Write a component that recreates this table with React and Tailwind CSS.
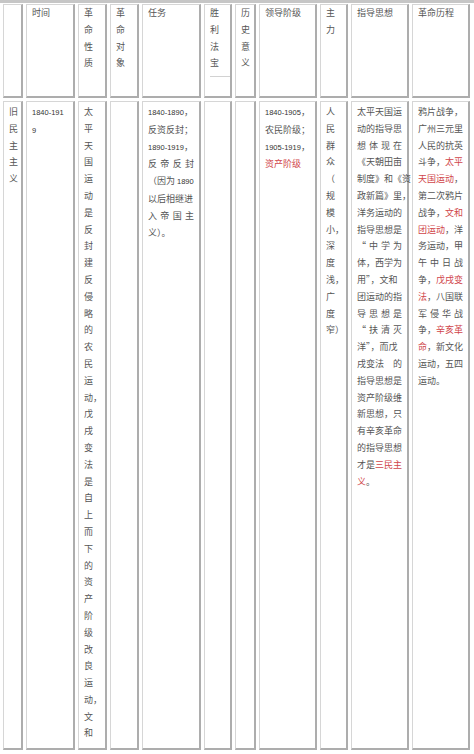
const red = "text-[#d0454a]";

function Cell({ children, className = "" }) {
	return (
		<div
			className={
				"border-t border-l border-t-[#d6d6d6] border-l-[#d6d6d6] border-r-2 border-b-2 border-r-[#adadad] border-b-[#adadad] pl-[5px] pr-[5px] " +
				className
			}
		>
			{children}
		</div>
	);
}

// one line of text, kept as laid out in the document
function L({ children }) {
	return <div className="whitespace-nowrap">{children}</div>;
}

// a spread-out line (justified with fewer chars)
function J({ items }) {
	return (
		<div className="flex justify-between whitespace-nowrap">
			{items.map((t, i) => (
				<span key={i}>{t}</span>
			))}
		</div>
	);
}

function N({ children }) {
	return <span className="font-['Liberation_Sans',sans-serif] text-[7.5px] text-[#333]">{children}</span>;
}

function R({ children }) {
	return <span className={red}>{children}</span>;
}

function Stack({ text }) {
	return (
		<>
			{text.map((t, i) => (
				<L key={i}>{t}</L>
			))}
		</>
	);
}

export default function App() {
	const nature =
		"太 平 天 国 运 动 是 反 封 建 反 侵 略 的 农 民 运 动， 戊 戌 变 法 是 自 上 而 下 的 资 产 阶 级 改 良 运 动， 文 和".split(" ");

	return (
		<div className="w-[474px] h-[754px] bg-white border-t-[3px] border-[#c6c6c6] pl-[3px] pt-px overflow-hidden font-['Noto_Sans_CJK_SC',sans-serif] text-[9px] leading-[16.8px] text-[#555]">
			<div className="grid grid-cols-[20px_49px_29px_29px_59px_28px_21px_58px_28px_58px_58px] grid-rows-[94px_649px] gap-[3px]">
				{/* header row */}
				<Cell />
				<Cell>
					<L>时间</L>
				</Cell>
				<Cell>
					<Stack text={["革", "命", "性", "质"]} />
				</Cell>
				<Cell>
					<Stack text={["革", "命", "对", "象"]} />
				</Cell>
				<Cell>
					<L>任务</L>
				</Cell>
				<Cell>
					<Stack text={["胜", "利", "法", "宝"]} />
					<div className="w-[20px] h-px bg-[#d2d2d2] mt-[4px]" />
				</Cell>
				<Cell>
					<Stack text={["历", "史", "意", "义"]} />
				</Cell>
				<Cell>
					<L>领导阶级</L>
				</Cell>
				<Cell>
					<Stack text={["主", "力"]} />
				</Cell>
				<Cell>
					<L>指导思想</L>
				</Cell>
				<Cell>
					<L>革命历程</L>
				</Cell>

				{/* body row */}
				<Cell className="pt-[2px] pl-[4px]">
					<Stack text={["旧", "民", "主", "主", "义"]} />
				</Cell>
				<Cell className="pt-[2px]">
					<L>
						<N>1840-191</N>
					</L>
					<L>
						<N>9</N>
					</L>
				</Cell>
				<Cell className="pt-[2px]">
					<Stack text={nature} />
				</Cell>
				<Cell />
				<Cell className="pt-[2px]">
					<L>
						<N>1840-1890</N>，
					</L>
					<L>反资反封；</L>
					<L>
						<N>1890-1919</N>，
					</L>
					<J items={["反", "帝", "反", "封"]} />
					<L>
						（因为 <N>1890</N>
					</L>
					<L>以后相继进</L>
					<J items={["入", "帝", "国", "主"]} />
					<L>义）。</L>
				</Cell>
				<Cell />
				<Cell />
				<Cell className="pt-[2px]">
					<L>
						<N>1840-1905</N>，
					</L>
					<L>农民阶级；</L>
					<L>
						<N>1905-1919</N>，
					</L>
					<L>
						<R>资产阶级</R>
					</L>
				</Cell>
				<Cell className="pt-[2px]">
					<Stack text={["人", "民", "群", "众", "（", "规", "模", "小，", "深", "度", "浅，", "广", "度", "窄）"]} />
				</Cell>
				<Cell className="pt-[2px]">
					<L>太平天国运</L>
					<L>动的指导思</L>
					<J items={["想", "体", "现", "在"]} />
					<L>《天朝田亩</L>
					<L>制度》和《资</L>
					<L>政新篇》里，</L>
					<L>洋务运动的</L>
					<L>指导思想是</L>
					<J items={["“", "中", "学", "为"]} />
					<L>体，西学为</L>
					<L>用”，文和</L>
					<L>团运动的指</L>
					<J items={["导", "思", "想", "是"]} />
					<J items={["“", "扶", "清", "灭"]} />
					<L>洋”，而戊</L>
					<J items={["戌变法", "的"]} />
					<L>指导思想是</L>
					<L>资产阶级维</L>
					<L>新思想，只</L>
					<L>有辛亥革命</L>
					<L>的指导思想</L>
					<L>
						才是<R>三民主</R>
					</L>
					<L>
						<R>义</R>。
					</L>
				</Cell>
				<Cell className="pt-[2px]">
					<L>鸦片战争，</L>
					<L>广州三元里</L>
					<L>人民的抗英</L>
					<L>
						斗争，<R>太平</R>
					</L>
					<L>
						<R>天国运动</R>，
					</L>
					<L>第二次鸦片</L>
					<L>
						战争，<R>文和</R>
					</L>
					<L>
						<R>团运动</R>，洋
					</L>
					<L>务运动，甲</L>
					<J items={["午", "中", "日", "战"]} />
					<L>
						争，<R>戊戌变</R>
					</L>
					<L>
						<R>法</R>，八国联
					</L>
					<J items={["军", "侵", "华", "战"]} />
					<L>
						争，<R>辛亥革</R>
					</L>
					<L>
						<R>命</R>，新文化
					</L>
					<L>运动，五四</L>
					<L>运动。</L>
				</Cell>
			</div>
		</div>
	);
}
